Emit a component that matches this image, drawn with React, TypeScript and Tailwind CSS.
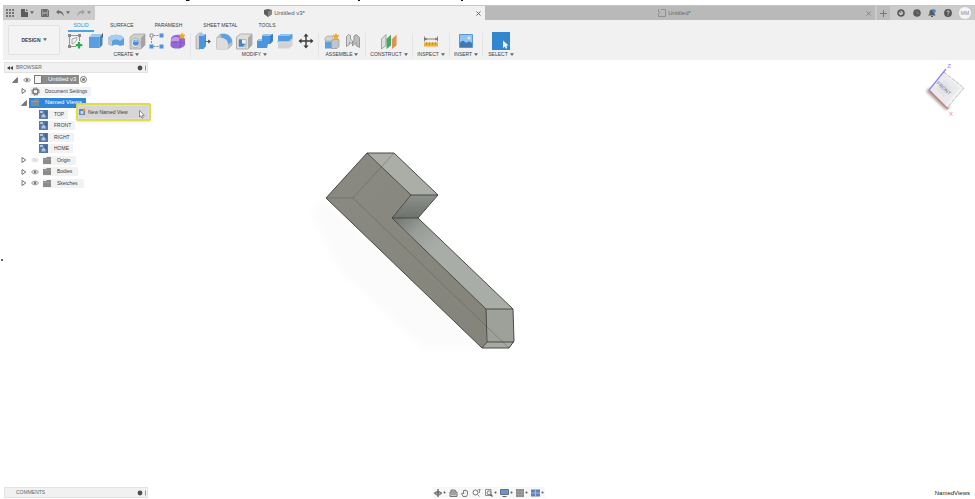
import React from "react";

type IconProps = { children: React.ReactNode; w?: number; h?: number; className?: string };

function Svg({ children, w = 18, h = 18, className = "" }: IconProps) {
  return (
    <svg width={w} height={h} viewBox={`0 0 ${w} ${h}`} fill="none" className={`block shrink-0 ${className}`} aria-hidden="true">
      {children}
    </svg>
  );
}

function Caret({ color = "#666" }: { color?: string }) {
  return (
    <Svg w={4} h={4}>
      <path d="M0 .3h4L2 3.100z" fill={color} />
    </Svg>
  );
}

/* ---------- ribbon icons ---------- */

const SketchIcon = () => (
  <Svg>
    <path d="M3 3.500h11M3.500 3v11.500M3 14.500h7M13.500 3v6" stroke="#8a8a8a" strokeWidth=".9" />
    <path d="M6 12V7l5-1.500M11 5.500c0 3-2 5.500-5 6.500" stroke="#999" strokeWidth=".8" />
    <path d="M2 2h3v3H2zM12 2h3v3h-3zM2 13h3v3H2z" fill="#8a8a8a" />
    <path d="M13 10v6.500M9.800 13.200h6.500" stroke="#2fa84f" strokeWidth="2.200" />
  </Svg>
);
const ExtrudeIcon = () => (
  <Svg>
    <path d="M2 5h10.500v11H2z" fill="#5b9fe0" />
    <path d="M2 5l3-3h10.500l-3 3z" fill="#9cc8f2" />
    <path d="M12.500 5l3-3v11l-3 3z" fill="#4a82ba" />
    <path d="M15.500 1.500v4" stroke="#555" />
  </Svg>
);
const RevolveIcon = () => (
  <Svg>
    <path d="M1 6c3-4.500 13-4.500 16 0v7l-4 1c-2-1.800-6-1.800-8 0l-4-2z" fill="#5b9fe0" />
    <path d="M1 6c3-4.500 13-4.500 16 0l-4 3c-2-2-6-2-8 0z" fill="#a6cdf3" />
    <path d="M1 6l4 3v5l-4-2z" fill="#c5c9cd" />
  </Svg>
);
const HoleIcon = () => (
  <Svg>
    <path d="M2 5l4-3h11v11l-4 4H2z" fill="#cfcfcf" stroke="#a2a2a2" strokeWidth=".7" />
    <path d="M13 6l4-4v11l-4 4z" fill="#a3a3a3" />
    <circle cx="7.500" cy="11" r="4.500" fill="#eee" stroke="#999" strokeWidth=".7" />
    <circle cx="7.800" cy="10.800" r="3" fill="#4b8fd3" />
    <path d="M5 10l3-2.500 2.500 2z" fill="#9cc4ec" />
  </Svg>
);
const PatternIcon = () => (
  <Svg>
    <path d="M5.500 3.500h6M3.500 6v6M5.500 14.500h6" stroke="#8d8d8d" strokeDasharray="2 1" />
    <path d="M2 2h3v3H2z" fill="#fff" stroke="#777" strokeWidth=".8" />
    <path d="M11.500 1.500h4v4h-4zM1.500 12.500h4v4h-4zM11.500 12.500h4v4h-4z" fill="#4b94df" />
  </Svg>
);
const FormIcon = () => (
  <Svg>
    <path d="M2 6c1-3 6-4 10-3l4 4v6c-2 3-6 4-10 3.500-3-.5-5-2-4.500-4z" fill="#9566d6" />
    <path d="M2.500 6.500c3-2 6-1.800 8-.5l-1 4c-2-1.500-5-1.500-7.500 0z" fill="#c29bf0" />
    <path d="M11 7c1 3 1 6-.5 9.500M2 10.500c3-1 6-.8 13.500.5" stroke="#7d50c0" strokeWidth=".7" />
    <path d="M13 .5l1.200 2 2.300.2-1.500 2 .8 2.300-2.800-1-2.200 1 .3-2.500L9.500 3l2.500-.5z" fill="#f2a81f" />
  </Svg>
);
const PressPullIcon = () => (
  <Svg>
    <path d="M2 4l3-3h3v13l-2 3H2z" fill="#d2d2d2" stroke="#a5a5a5" strokeWidth=".7" />
    <path d="M5 4l2-2h5v12l-2.500 3H5z" fill="#4b94df" />
    <path d="M5 4l2-2h5L9.500 4z" fill="#9cc8f2" />
    <path d="M11 9.500h4M14.500 8l2 1.500-2 1.500z" stroke="#555" fill="#555" strokeWidth=".8" />
  </Svg>
);
const FilletIcon = () => (
  <Svg>
    <path d="M1.500 6l4-4H9c5 0 8 4 8 8v3l-4 4H1.500z" fill="#c2c2c2" stroke="#a5a5a5" strokeWidth=".7" />
    <path d="M5.500 2H9c5 0 8 4 8 8l-4 2.500c0-4-3-6.500-6.500-6.500z" fill="#5ba3e8" />
    <path d="M1.500 6h4c5 0 7.500 3 7.500 7v4H1.500z" fill="#ddd" />
  </Svg>
);
const ShellIcon = () => (
  <Svg>
    <path d="M1.500 5l4-3H17v11l-4 4H1.500z" fill="#dedede" stroke="#999" strokeWidth=".7" />
    <path d="M13 5.500L17 2v11l-4 4z" fill="#a9a9a9" />
    <path d="M4 7.500h7v7H4z" fill="#f2f2f2" stroke="#999" strokeWidth=".6" />
    <path d="M4 7.500h3v4l4 .5-3 2.500H4z" fill="#3f86cc" />
  </Svg>
);
const CombineIcon = () => (
  <Svg>
    <path d="M6 4l2-2h9v7l-3 3h-2l-1 4H1V9l2-2h3z" fill="#4b94df" />
    <path d="M6 4l2-2h9l-3 2zM1 9l2-2h3v2z" fill="#94c4f2" />
    <path d="M14 4l3-2v7l-3 3z" fill="#3f7fbe" />
  </Svg>
);
const SplitIcon = () => (
  <Svg>
    <path d="M2 10.500h11l3.500-3v6L13 16.500H2z" fill="#d2d2d2" />
    <path d="M2 4l3-2h11.500v4L13 9H2z" fill="#529ce5" />
    <path d="M2 4l3-2h11.500L13 4z" fill="#94c4f2" />
    <path d="M1 9.700h12l4-3" stroke="#b5b5b5" />
  </Svg>
);
const MoveIcon = () => (
  <Svg>
    <path d="M9 3v12M3 9h12" stroke="#3b3b3b" strokeWidth="1.400" />
    <path d="M9 1.500l2.500 3h-5zM9 16.500l2.500-3h-5zM1.500 9l3-2.500v5zM16.500 9l-3-2.500v5z" fill="#3b3b3b" />
  </Svg>
);
const ComponentIcon = () => (
  <Svg>
    <path d="M2 6l2-2h6v5H2z" fill="#d4d4d4" stroke="#999" strokeWidth=".6" />
    <path d="M2 9.500h6.500v7H2z" fill="#5b9fe0" />
    <path d="M8.500 9.500l2-2H16v7l-2 2H8.500z" fill="#c2c5c9" stroke="#8a8a8a" strokeWidth=".6" />
    <path d="M13 1l1 2 2.500.3-1.800 1.900.7 2.300-2.400-1-2.200 1 .3-2.400-1.600-2 2.500-.3z" fill="#f2a81f" />
  </Svg>
);
const JointIcon = () => (
  <Svg>
    <path d="M2.500 14.500V4.500l2-2 2 1v3.500l2 2v3l-3-2v2.500z" fill="#d5d5d5" stroke="#888" strokeWidth=".8" />
    <path d="M15.500 15.500v-10l-3-3-2.500 1.500v4.500L8.500 11v3l3.500-3.500v3z" fill="#bdbdbd" stroke="#888" strokeWidth=".8" />
  </Svg>
);
const PlaneIcon = () => (
  <Svg>
    <path d="M1.500 7L6 2.500v11L1.500 17z" fill="#dedede" stroke="#888" strokeWidth=".7" />
    <path d="M6.500 7L11 2.500v11L6.500 17z" fill="#42a962" />
    <path d="M12 7l4.500-4.500v11L12 17z" fill="#e09255" />
  </Svg>
);
const MeasureIcon = () => (
  <Svg>
    <path d="M2.500 4.500v5M15.500 4.500v5M2 7h14" stroke="#777" strokeWidth=".9" />
    <path d="M2.500 7l2-1.500v3zM15.500 7l-2-1.500v3z" fill="#666" />
    <path d="M2 10.500h14v4H2z" fill="#f0ad2e" />
    <path d="M4.500 10.500v1.800M7.500 10.500v1.800M10.500 10.500v1.800M13.500 10.500v1.800" stroke="#a76b08" strokeWidth=".7" />
  </Svg>
);
const InsertIcon = () => (
  <Svg>
    <path d="M2.500 2.500h13v13h-13z" fill="#8fc4f7" stroke="#5b98d4" />
    <path d="M3 11c2-2.500 3-3 5-1l1 1c2-2 4-2 6 0v4H3z" fill="#3e78b5" />
    <circle cx="12" cy="6" r="1.500" fill="#f8e7a0" />
  </Svg>
);
const SelectIcon = () => (
  <Svg>
    <path d="M0 0h18v18H0z" fill="#2f86d6" />
    <path d="M2.500 2.500h12v9h-12z" stroke="#3f8f9e" strokeDasharray="2 1.200" strokeWidth=".9" />
    <path d="M11 8.500v7.500l1.800-1.600 1.200 2.300 1.200-.7-1-2.200 2.300-.3z" fill="#fff" />
  </Svg>
);

type Group = { label: string; icons: [string, () => React.JSX.Element][]; width: string; cols: string };

const groups: Group[] = [
  {
    label: "CREATE",
    width: "w-[123px]",
    cols: "grid-cols-6",
    icons: [["Sketch", SketchIcon], ["Extrude", ExtrudeIcon], ["Revolve", RevolveIcon], ["Hole", HoleIcon], ["Pattern", PatternIcon], ["Form", FormIcon]],
  },
  {
    label: "MODIFY",
    width: "w-[123px]",
    cols: "grid-cols-6",
    icons: [["Press pull", PressPullIcon], ["Fillet", FilletIcon], ["Shell", ShellIcon], ["Combine", CombineIcon], ["Split", SplitIcon], ["Move", MoveIcon]],
  },
  { label: "ASSEMBLE", width: "w-[42px]", cols: "grid-cols-2", icons: [["Component", ComponentIcon], ["Joint", JointIcon]] },
  { label: "CONSTRUCT", width: "w-[42px]", cols: "grid-cols-1", icons: [["Plane", PlaneIcon]] },
  { label: "INSPECT", width: "w-[32px]", cols: "grid-cols-1", icons: [["Measure", MeasureIcon]] },
  { label: "INSERT", width: "w-[28px]", cols: "grid-cols-1", icons: [["Image", InsertIcon]] },
  { label: "SELECT", width: "w-[32px]", cols: "grid-cols-1", icons: [["Select", SelectIcon]] },
];

/* ---------- title bar ---------- */

function TitleBar() {
  return (
    <header className="flex h-[15px] items-stretch border-t border-[#c6c6c6] bg-[#cbcbcb] text-[6px] leading-[8px] text-[#555]">
      <div className="flex w-[92px] shrink-0 items-center justify-between pr-1 pl-[3px]">
        <button aria-label="Data panel">
          <Svg w={8} h={8}><path d="M0 0h2v2H0zM3 0h2v2H3zM6 0h2v2H6zM0 3h2v2H0zM3 3h2v2H3zM6 3h2v2H6zM0 6h2v2H0zM3 6h2v2H3zM6 6h2v2H6z" fill="#777" /></Svg>
        </button>
        <button aria-label="File" className="flex items-center gap-[2px]">
          <Svg w={7} h={8}><path d="M0 0h4v3h3v5H0zM5 0l2 2H5z" fill="#5c5c5c" /></Svg>
          <Caret />
        </button>
        <button aria-label="Save">
          <Svg w={8} h={8}><path d="M.5.500h6l1 1v6h-7z" stroke="#6c6c6c" fill="#999" /><path d="M2 1h4v2H2zM2 5h4v2.500H2z" fill="#6c6c6c" /></Svg>
        </button>
        <button aria-label="Undo" className="flex items-center gap-[2px]">
          <Svg w={8} h={8}><path d="M0 3l3-2.500V2c3 0 5 2 4.500 5.500C6.500 5 5.500 4 3 4v1.500z" fill="#707070" /></Svg>
          <Caret />
        </button>
        <button aria-label="Redo" className="flex items-center gap-[2px]">
          <Svg w={8} h={8}><path d="M8 3L5 .500V2C2 2 0 4 .5 7.500 1.500 5 2.500 4 5 4v1.500z" fill="#a2a2a2" /></Svg>
          <Caret color="#8a8a8a" />
        </button>
      </div>
      <div className="flex min-w-0 flex-1 items-center bg-[#f1f1f1] pr-[2px]">
        <button className="flex flex-1 items-center justify-center gap-[2px]">
          <Svg w={8} h={8}><path d="M0 1l4-1 4 1v4L4 8 0 5z" fill="#5d5d5d" /><path d="M4 2.500L8 1v4L4 8z" fill="#858585" /></Svg>
          Untitled v3*
        </button>
        <button aria-label="Close Untitled v3" className="p-[2px]">
          <Svg w={5} h={5}><path d="M.5.500l4 4M4.500.500l-4 4" stroke="#666" /></Svg>
        </button>
      </div>
      <div className="flex min-w-0 flex-1 items-center bg-[#b9b9b9] pr-[2px] text-[#6a6a6a]">
        <button className="flex flex-1 items-center justify-center gap-[2px]">
          <Svg w={8} h={8}><path d="M3 .500h4.500v7h-4M.5 0v3M.5 4.500v3h3M2 2.500l-1 2" stroke="#858585" strokeWidth=".8" /></Svg>
          Untitled*
        </button>
        <button aria-label="Close Untitled" className="p-[2px]">
          <Svg w={5} h={5}><path d="M.5.500l4 4M4.500.500l-4 4" stroke="#777" strokeWidth=".8" /></Svg>
        </button>
      </div>
      <div className="flex w-[100px] shrink-0 items-center justify-between pr-1 pl-[2px]">
        <button aria-label="New tab" className="flex h-full w-[13px] items-center justify-center bg-[#bcbcbc]">
          <Svg w={7} h={7}><path d="M3.500 0v7M0 3.500h7" stroke="#777" /></Svg>
        </button>
        <button aria-label="Extensions">
          <Svg w={8} h={8}><circle cx="4" cy="4" r="2.900" stroke="#5a5a5a" strokeWidth="1.800" /><path d="M2 1l2 3" stroke="#5a5a5a" /></Svg>
        </button>
        <button aria-label="Job status">
          <Svg w={8} h={8}><circle cx="4" cy="4" r="3.800" fill="#5a5a5a" /><path d="M4 2v2.300h2" stroke="#888" strokeWidth=".8" /></Svg>
        </button>
        <button aria-label="Notifications">
          <Svg w={8} h={8}><path d="M0 6.500l1.500-2V3a2.500 2.500 0 0 1 5 0v1.500l1 2zM3 7h2v1H3z" fill="#5a5a5a" /><circle cx="6" cy="2" r="1.800" fill="#2e8ce0" /></Svg>
        </button>
        <button aria-label="Help">
          <Svg w={8} h={8}><circle cx="4" cy="4" r="3.900" fill="#555" /><path d="M2.800 3c0-1.500 2.500-1.500 2.400 0 0 .9-1.200.9-1.200 1.800M4 5.500v1" stroke="#ddd" strokeWidth=".9" /></Svg>
        </button>
        <button aria-label="Account" className="flex size-3 items-center justify-center rounded-full bg-[#f5f5f5] text-[5px] text-[#888]">MM</button>
      </div>
    </header>
  );
}

/* ---------- ribbon ---------- */

function Ribbon() {
  return (
    <div className="flex h-10 bg-[#f1f1f1] pl-[5px] text-[5px] leading-[7px] text-[#3c3c3c]">
      <button className="mt-[5px] flex h-[30px] w-[52px] shrink-0 items-center justify-center gap-[2px] rounded-[2px] border border-[#e2e2e2] bg-[#f3f3f3] font-bold">
        DESIGN <Caret />
      </button>
      <div className="ml-[5px]">
        <nav className="flex h-3 items-end pl-[3px]">
          <button className="h-[10px] w-[26px] border-b-2 border-[#4fa3dc] pb-px text-[#2f93d6]">SOLID</button>
          <div className="ml-4 flex gap-[21px] pb-[3px]">
            <button>SURFACE</button>
            <button>PARAMESH</button>
            <button>SHEET METAL</button>
            <button>TOOLS</button>
          </div>
        </nav>
        <div className="flex">
          {groups.map((g, i) => (
            <React.Fragment key={g.label}>
              {i > 0 && <div className="mx-[2px] mt-px h-6 w-px bg-[#e4e4e4]" />}
              <div className={`shrink-0 ${g.width}`}>
                <div className={`grid h-[18px] justify-items-center ${g.cols}`}>
                  {g.icons.map(([name, Icon]) => (
                    <button key={name} aria-label={name}><Icon /></button>
                  ))}
                </div>
                <button className="flex w-full items-center justify-center gap-[2px] pt-px whitespace-nowrap">
                  {g.label} <Caret />
                </button>
              </div>
            </React.Fragment>
          ))}
        </div>
      </div>
    </div>
  );
}

/* ---------- browser tree ---------- */

function PanelDot() {
  return (
    <Svg w={10} h={6}>
      <circle cx="3" cy="3" r="2.400" fill="#4d4d4d" />
      <path d="M8.500.500v5" stroke="#999" />
    </Svg>
  );
}
const OpenArrow = () => (
  <Svg w={6} h={6}><path d="M5.500.500v5h-5z" fill="#777" stroke="#666" strokeWidth=".7" /></Svg>
);
const ClosedArrow = () => (
  <Svg w={6} h={6}><path d="M1 .500L4.800 3 1 5.500z" fill="#fff" stroke="#555" strokeWidth=".8" /></Svg>
);
const Eye = ({ faded = false }: { faded?: boolean }) => (
  <Svg w={8} h={6}>
    <path d="M.5 3C2 .500 6 .500 7.500 3 6 5.500 2 5.500.5 3z" fill="#e8e8e8" stroke={faded ? "#ddd" : "#888"} strokeWidth=".8" />
    <circle cx="4" cy="3" r="1.200" fill={faded ? "#ddd" : "#777"} />
  </Svg>
);
const Folder = ({ color = "#8c8c8c" }: { color?: string }) => (
  <Svg w={8} h={7}><path d="M0 1h3l1-1h4v7H0z" fill={color} /><path d="M0 2.500h8" stroke="#aaa" strokeWidth=".5" /></Svg>
);
const ViewIcon = () => (
  <Svg w={9} h={9}>
    <path d="M0 0h9v9H0z" fill="#5577a6" />
    <path d="M1 1h3v2H1zM2.500 5.500l2-2 2 2v2h-4z" fill="#b0c4df" />
    <path d="M7 1v4" stroke="#3c5883" />
  </Svg>
);

function FolderRow({ name, faded }: { name: string; faded?: boolean }) {
  return (
    <li className="flex items-center pl-[18px]">
      <button aria-label={`Expand ${name}`}><ClosedArrow /></button>
      <button aria-label={`Toggle ${name}`} className="ml-1"><Eye faded={faded} /></button>
      <button className="ml-1 flex h-[9px] items-center gap-[6px] bg-[#f2f2f2] pr-[6px]"><Folder />{name}</button>
    </li>
  );
}

function BrowserPanel() {
  return (
    <aside className="w-[145px] pt-[2px] text-[5px] leading-[7px] text-[#3c3c3c]">
      <div className="ml-px flex h-[11px] items-center border border-[#e2e2e2] bg-[#f1f1f1] pl-[2px]">
        <Svg w={6} h={4}><path d="M3 0v4L0 2zM6 0v4L3 2z" fill="#444" /></Svg>
        <span className="ml-[3px] flex-1 text-[#666]">BROWSER</span>
        <PanelDot />
      </div>
      <ul className="mt-px grid h-[115px] grid-rows-10">
        <li className="flex items-center pl-[9px]">
          <button aria-label="Collapse Untitled v3"><OpenArrow /></button>
          <button aria-label="Toggle Untitled v3" className="ml-[5px]"><Eye /></button>
          <button className="ml-[3px] flex h-[9px] items-center bg-[#8a8a8a] pr-[3px] text-[6px] text-white">
            <Svg w={8} h={9}><path d="M.5.500h6l1 1v7h-7z" fill="#f4f4f4" stroke="#777" /></Svg>
            <span className="ml-[6px]">Untitled v3</span>
          </button>
          <label className="ml-px flex">
            <input type="radio" defaultChecked aria-label="Activate Untitled v3" className="size-[7px] appearance-none rounded-full border border-[#777] bg-[#777] bg-clip-content p-px" />
          </label>
        </li>
        <li className="flex items-center pl-[18px]">
          <button aria-label="Expand Document Settings"><ClosedArrow /></button>
          <button className="ml-[3px] flex h-[9px] items-center gap-[5px] bg-[#f2f2f2] pr-[4px] pl-px">
            <Svg w={9} h={9}><circle cx="4.500" cy="4.500" r="2.600" stroke="#777" strokeWidth="1.500" /><circle cx="4.500" cy="4.500" r="3.800" stroke="#777" strokeDasharray="1.500 1.480" /></Svg>
            Document Settings
          </button>
        </li>
        <li className="flex items-center pl-[18px]">
          <button aria-label="Collapse Named Views"><OpenArrow /></button>
          <button className="ml-[2px] flex h-[10px] w-[57px] items-center gap-[6px] bg-[#2f86d8] pl-[2px] text-[6px] whitespace-nowrap text-white"><Folder color="#7b8b99" />Named Views</button>
        </li>
        {["TOP", "FRONT", "RIGHT", "HOME"].map((v) => (
          <li key={v} className="flex items-center pl-[36px]">
            <button className="flex h-[9px] items-center gap-[6px] bg-[#f2f2f2] pr-[4px]"><ViewIcon />{v}</button>
          </li>
        ))}
        <FolderRow name="Origin" faded />
        <FolderRow name="Bodies" />
        <FolderRow name="Sketches" />
      </ul>
    </aside>
  );
}

/* Right-click menu of the Named Views folder, open over the tree */
function ContextMenu() {
  return (
    <div role="menu" className="absolute top-[43px] left-[73px] flex h-[18px] w-[75px] rounded-[2px] border-2 border-[#dcdc4c] bg-[#dedede] p-px shadow-sm">
      <button role="menuitem" className="flex flex-1 items-center gap-[2px] bg-[#d6d6d6] text-[5px] leading-[7px] text-[#3c3c3c]">
        <Svg w={7} h={8}><path d="M0 1h6v6H0z" fill="#6487b8" /><path d="M1.500 3h3v3h-3z" fill="#c8d6e8" /><circle cx="5.200" cy="1.800" r="1.300" fill="#e59a3d" /></Svg>
        New Named View
      </button>
      <Svg w={6} h={9} className="absolute right-[4px] bottom-0"><path d="M.5.500v6.500L2 5.700l1 2.500 1.200-.5-1-2.300h2z" fill="#fff" stroke="#555" strokeWidth=".6" /></Svg>
    </div>
  );
}

/* ---------- model canvas ---------- */

function Model() {
  return (
    <svg viewBox="0 0 220 220" width="220" height="220" className="absolute top-[80px] left-[307px] overflow-visible" role="img" aria-label="Solid body">
      <defs>
        <linearGradient id="side" x1="0" y1="0" x2="1" y2="1"><stop offset="0" stopColor="#8b8a82" /><stop offset="1" stopColor="#85847b" /></linearGradient>
        <linearGradient id="inner" x1="0" y1="0" x2="0" y2="1"><stop offset="0" stopColor="#8d918c" /><stop offset="1" stopColor="#6e716c" /></linearGradient>
        <linearGradient id="arm" gradientUnits="userSpaceOnUse" x1="90" y1="78" x2="120" y2="112"><stop offset="0" stopColor="#777b76" /><stop offset=".45" stopColor="#989d97" /><stop offset="1" stopColor="#a9ada7" /></linearGradient>
        <filter id="ground"><feGaussianBlur stdDeviation="4" /></filter>
      </defs>
      <path d="M16 60L0 70l30 60 84 78 56 0z" fill="#fbfbfb" filter="url(#ground)" />
      <path d="M57 13h27l44 42h-27z" fill="#aaaea7" />
      <path d="M101 55h27l-20 23H82z" fill="url(#inner)" />
      <path d="M82 78h26l95 91h-27z" fill="url(#arm)" />
      <path d="M57 13l44 42-19 23 94 91 1 33-5 6L16 58z" fill="url(#side)" />
      <path d="M176 169h27l1 32-5 7h-27l4-6z" fill="#9ea19a" />
      <path d="M172 208l5-6h27l-5 6z" fill="#a7aaa3" />
      <path d="M16 58h27l41-45M43 58l156 150" stroke="#55564f" strokeOpacity=".5" strokeWidth=".8" fill="none" />
      <path d="M57 13h27l44 42-20 23 95 91 1 32-5 7h-27L16 58zM57 13l44 42h27M101 55L82 78h26M82 78l94 91h27M176 169l1 33-5 6M177 202h27" stroke="#484944" strokeWidth="1" strokeLinejoin="round" fill="none" />
    </svg>
  );
}

function ViewCube() {
  return (
    <svg viewBox="0 0 50 60" width="50" height="60" className="absolute top-0 right-0" role="img" aria-label="View cube">
      <defs><filter id="cubeShadow" x="-50%" y="-50%" width="200%" height="200%"><feGaussianBlur stdDeviation="1.500" /></filter></defs>
      <path d="M1 31l20 19 4-3L5 28z" fill="#999" filter="url(#cubeShadow)" />
      <path d="M19 12l20 16-17 20-3-3z" fill="#f2f2f2" stroke="#bdbdbd" strokeWidth="1" strokeDasharray="4 1" />
      <path d="M19 13l15 15-14 18L4 30z" fill="#e9eaec" />
      <path d="M19 20l8 8-8 9-8-8z" fill="#e0e3e9" />
      <path d="M4 30L21 9" stroke="#8b80f5" strokeWidth="1.200" />
      <path d="M4 30l19 19" stroke="#d87878" strokeWidth="1.200" />
      <text x="19" y="30" fontSize="5" fill="#6f6f6f" textAnchor="middle" transform="rotate(43 19 28)">FRONT</text>
      <text x="24" y="8" fontSize="6" fill="#8b80f5" textAnchor="middle">Z</text>
      <text x="26" y="56" fontSize="6" fill="#ee8484" textAnchor="middle">X</text>
    </svg>
  );
}

/* ---------- footer ---------- */

const Dot = () => <Svg w={3} h={3}><circle cx="1.500" cy="1.500" r="1" fill="#555" /></Svg>;

function NavBar() {
  return (
    <div className="flex h-[11px] w-[112px] items-center justify-between bg-[#f7f7f7] px-px">
      <button aria-label="Orbit" className="flex items-center gap-px"><Svg w={8} h={8}><path d="M4 0v8M0 4h8" stroke="#555" strokeWidth="1.200" /><ellipse cx="4" cy="4.300" rx="3" ry="1.800" stroke="#666" /></Svg><Dot /></button>
      <button aria-label="Look at"><Svg w={9} h={8}><path d="M1 3h7v4.500H1zM2 3V1h4l1 2" stroke="#777" fill="#ccc" /><path d="M2 5h5" stroke="#777" /></Svg></button>
      <button aria-label="Pan"><Svg w={8} h={8}><path d="M2 7.500L.5 4.500l1-.5 1 1V1.500h1V1h1v.5h1V2h1v3.500l-1 2z" fill="#eee" stroke="#666" strokeWidth=".8" /></Svg></button>
      <button aria-label="Zoom"><Svg w={9} h={8}><circle cx="3.500" cy="3.500" r="2.500" stroke="#777" /><path d="M5.500 5.500l2 2M7.500 0v4M6 1.500L7.500 0 9 1.500" stroke="#777" strokeWidth=".8" /></Svg></button>
      <button aria-label="Fit" className="flex items-center gap-px"><Svg w={8} h={8}><path d="M.5.500h5.500v6H.5z" stroke="#777" strokeWidth=".8" /><circle cx="4" cy="3.800" r="2" fill="#eee" stroke="#666" strokeWidth=".8" /><path d="M5.500 5.500l2 2" stroke="#555" strokeWidth="1.200" /></Svg><Dot /></button>
      <button aria-label="Display settings" className="flex items-center gap-px"><Svg w={9} h={8}><path d="M.5.500h8v5h-8z" fill="#6e95c8" stroke="#66707c" /><path d="M2.500 7.500h4" stroke="#666" /></Svg><Dot /></button>
      <button aria-label="Grid settings" className="flex items-center gap-px"><Svg w={8} h={8}><path d="M0 0h8v8H0z" fill="#8c8c8c" /><path d="M0 2.700h8M0 5.400h8M2.700 0v8M5.400 0v8" stroke="#a8a8a8" strokeWidth=".6" /></Svg><Dot /></button>
      <button aria-label="Viewports" className="flex items-center gap-px"><Svg w={9} h={8}><path d="M0 .500h9v7H0z" fill="#5f83b8" /><path d="M4.500.500v7M0 4h9" stroke="#b9c9e2" strokeWidth=".8" /></Svg><Dot /></button>
    </div>
  );
}

export default function App() {
  return (
    <div className="flex min-h-screen flex-col overflow-hidden bg-white font-['Liberation_Sans',Arial,sans-serif]">
      <div className="h-[5px] shrink-0">
        <svg width="480" height="5" className="block" aria-hidden="true">
          <path d="M186 0h4l-1 1h-3zM358 0h2v1h-2zM461 0h2v1h-2z" fill="#111" />
        </svg>
      </div>
      <div className="ml-[3px] flex flex-1 flex-col">
        <TitleBar />
        <Ribbon />
        <main className="relative flex-1">
          <Model />
          <BrowserPanel />
          <ContextMenu />
          <ViewCube />
          <span className="absolute top-[199px] -left-[2px] size-[2px] rounded-full bg-[#333]" />
        </main>
        <footer className="grid grid-cols-[1fr_auto_1fr] items-center pb-px">
          <div className="ml-px flex h-[11px] w-[144px] items-center border border-[#e2e2e2] bg-[#f1f1f1] pl-[11px] text-[5px] leading-[7px] text-[#666]">
            <span className="flex-1">COMMENTS</span>
            <PanelDot />
          </div>
          <NavBar />
          <span className="pr-[5px] text-right text-[6px] leading-[8px] text-[#222]">NamedViews</span>
        </footer>
      </div>
    </div>
  );
}
